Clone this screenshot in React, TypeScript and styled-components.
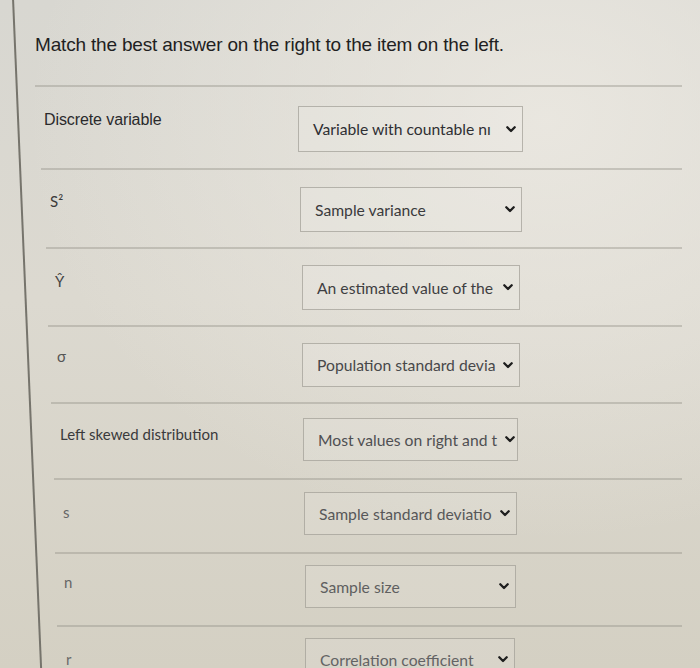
import React from "react";
import styled, { createGlobalStyle } from "styled-components";

const GlobalStyle = createGlobalStyle`
  html, body { margin: 0; padding: 0; }
  body { background: #d9d7cf; }
`;

const Screen = styled.div`
  position: relative;
  width: 700px;
  height: 668px;
  overflow: hidden;
  background:
    radial-gradient(ellipse 520px 420px at 78% 18%, rgba(236, 233, 226, 0.85), rgba(236, 233, 226, 0) 100%),
    linear-gradient(180deg, #d8d7d1 0%, #dcd9d0 45%, #d4d0c3 100%);
  &::before {
    content: "";
    position: absolute;
    left: 12px;
    top: -2px;
    width: 1.5px;
    height: 680px;
    background: #76746c;
    transform-origin: top left;
    transform: rotate(-2.4deg);
  }
`;

const Sheet = styled.div`
  padding-top: 33px;
`;

const Title = styled.h1`
  margin: 0 0 29px 35px;
  font-family: "Liberation Sans", Arial, sans-serif;
  font-weight: 400;
  font-size: 19px;
  line-height: 23px;
  letter-spacing: -0.18px;
  color: #1f1f22;
`;

const Row = styled.div<{ $h: number }>`
  height: ${(p) => p.$h}px;
  display: flex;
  flex-direction: column;
`;

const Rule = styled.div<{ $left: number }>`
  height: 2px;
  margin-left: ${(p) => p.$left}px;
  width: ${(p) => 682 - p.$left}px;
  background: rgba(150, 147, 138, 0.42);
`;

const Cells = styled.div<{ $left: number; $labelW: number }>`
  display: grid;
  grid-template-columns: ${(p) => p.$labelW}px auto;
  align-items: start;
  padding-left: ${(p) => p.$left}px;
`;

const Label = styled.div<{ $top: number; $arial?: boolean; $tone: string }>`
  margin-top: ${(p) => p.$top}px;
  font-family: ${(p) => (p.$arial ? `"Liberation Sans", Arial` : `Lato, "Open Sans"`)}, sans-serif;
  font-size: ${(p) => (p.$arial ? 16 : 15)}px;
  line-height: 20px;
  letter-spacing: ${(p) => (p.$arial ? "-0.1px" : "0")};
  color: ${(p) => p.$tone};
`;

const Select = styled.div<{ $top: number; $w: number; $h: number; $tone: string }>`
  margin-top: ${(p) => p.$top}px;
  width: ${(p) => p.$w}px;
  height: ${(p) => p.$h}px;
  box-sizing: border-box;
  border: 1.5px solid rgba(160, 157, 148, 0.7);
  background: rgba(255, 255, 255, 0.1);
  display: grid;
  grid-template-columns: 1fr 10px;
  column-gap: 8px;
  align-items: center;
  padding: 0 6px 0 14px;
  color: ${(p) => p.$tone};
  font-family: Lato, "Open Sans", sans-serif;
  font-size: 15.7px;
`;

const SelectText = styled.span`
  white-space: nowrap;
`;

const ChevronIcon = styled.svg`
  display: block;
`;

const Chevron = () => (
  <ChevronIcon width="10" height="7" viewBox="0 0 10 7" aria-hidden="true">
    <path d="M1.3 1.3 L5 5 L8.7 1.3" fill="none" stroke="#1e1e1e" strokeWidth="2.3" strokeLinecap="round" strokeLinejoin="round" />
  </ChevronIcon>
);

type Item = {
  label: React.ReactNode;
  answer: string;
  h: number;
  labelX: number;
  selX: number;
  w: number;
  sh: number;
  selTop: number;
  labelTop: number;
  arial?: boolean;
  tone: string;
  selTone: string;
};

const items: Item[] = [
  { label: "Discrete variable", answer: "Variable with countable nı", h: 83, labelX: 44, selX: 298, w: 225, sh: 46, selTop: 19, labelTop: 23, arial: true, tone: "#2a2a2c", selTone: "#2f2f33" },
  { label: "S²", answer: "Sample variance", h: 79, labelX: 50, selX: 300, w: 222, sh: 45, selTop: 17, labelTop: 21, tone: "#3a3a3a", selTone: "#3a3a3c" },
  { label: "Ŷ", answer: "An estimated value of the", h: 78, labelX: 55, selX: 302, w: 218, sh: 45, selTop: 16, labelTop: 22, tone: "#444", selTone: "#3f3f42" },
  { label: "σ", answer: "Population standard devia", h: 77, labelX: 57, selX: 302, w: 218, sh: 44, selTop: 16, labelTop: 19, tone: "#555", selTone: "#48484a" },
  { label: "Left skewed distribution", answer: "Most values on right and t", h: 76, labelX: 60, selX: 303, w: 215, sh: 43, selTop: 14, labelTop: 20, tone: "#3a3a3c", selTone: "#4f4f52" },
  { label: "s", answer: "Sample standard deviatio", h: 74, labelX: 63, selX: 304, w: 213, sh: 43, selTop: 12, labelTop: 22, tone: "#666", selTone: "#575759" },
  { label: "n", answer: "Sample size", h: 73, labelX: 64, selX: 305, w: 211, sh: 43, selTop: 11, labelTop: 18, tone: "#666", selTone: "#5f5f60" },
  { label: "r", answer: "Correlation coefficient", h: 60, labelX: 66, selX: 305, w: 210, sh: 43, selTop: 11, labelTop: 22, tone: "#6a6a6a", selTone: "#636364" },
];

export default function App() {
  return (
    <>
      <GlobalStyle />
      <Screen>
        <Sheet>
          <Title>Match the best answer on the right to the item on the left.</Title>
          {items.map((it, i) => (
            <Row key={i} $h={it.h}>
              <Rule $left={it.labelX - 9} />
              <Cells $left={it.labelX} $labelW={it.selX - it.labelX}>
                <Label $top={it.labelTop} $arial={it.arial} $tone={it.tone}>
                  {it.label}
                </Label>
                <Select $top={it.selTop} $w={it.w} $h={it.sh} $tone={it.selTone}>
                  <SelectText>{it.answer}</SelectText>
                  <Chevron />
                </Select>
              </Cells>
            </Row>
          ))}
        </Sheet>
      </Screen>
    </>
  );
}
